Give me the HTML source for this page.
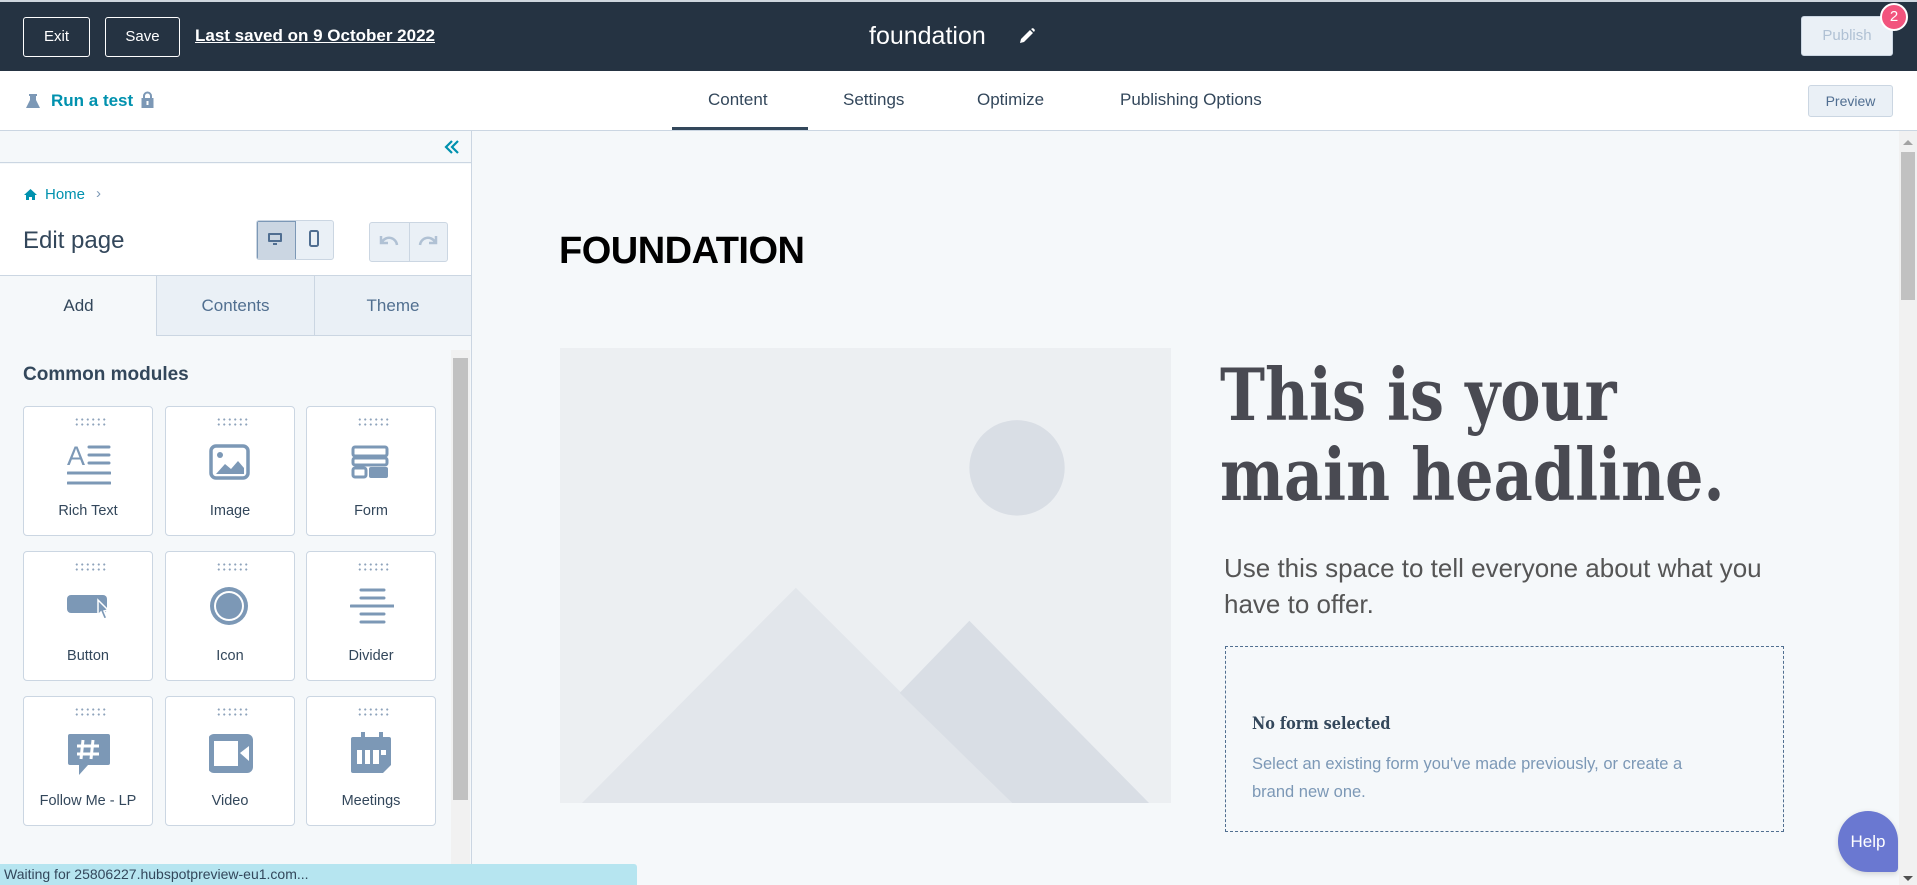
<!DOCTYPE html>
<html><head><meta charset="utf-8"><style>
*{box-sizing:border-box;margin:0;padding:0}
body{width:1917px;height:885px;overflow:hidden;font-family:"Liberation Sans",sans-serif;background:#f5f8fa;position:relative;color:#33475b}
.abs{position:absolute}
.top{left:0;top:0;width:1917px;height:71px;background:#253342;border-top:2px solid #cfd6de}
.btn{position:absolute;border:1px solid #fff;border-radius:3px;color:#fff;font-size:15px;text-align:center;line-height:38px;height:40px;top:15px}
.bar2{left:0;top:71px;width:1917px;height:60px;background:#fff;border-bottom:1px solid #cbd6e2}
.tab{position:absolute;top:19px;font-size:17px;color:#33475b}
.side{left:0;top:131px;width:472px;height:754px;background:#f5f8fa;border-right:1px solid #cbd6e2}
.card{position:absolute;width:130px;height:130px;background:#fff;border:1px solid #cbd6e2;border-radius:4px}
.card .dots{position:absolute;left:50px;top:10px;width:34px;height:10px;background-image:radial-gradient(circle,#8ea3bb 0.9px,transparent 1.2px);background-size:5.5px 5px}
.card svg{position:absolute;left:43px;top:34px}
.card .lb{position:absolute;left:0;right:0;top:96px;text-align:center;font-size:14.5px;color:#33475b}
</style></head><body>
<div class="abs top">
 <div class="btn" style="left:23px;width:67px">Exit</div>
 <div class="btn" style="left:105px;width:75px">Save</div>
 <div class="abs" style="left:195px;top:24px;color:#fff;font-size:17px;font-weight:bold;text-decoration:underline">Last saved on 9 October 2022</div>
 <div class="abs" style="left:869px;top:20px;color:#fff;font-size:25px">foundation</div>
 <svg class="abs" style="left:1018px;top:25px" width="18" height="18" viewBox="0 0 18 18"><path d="M2 16l1-4 9-9 3 3-9 9z M13 2l2-1 2 2-1 2z" fill="#fff"/></svg>
 <div class="abs" style="left:1801px;top:14px;width:92px;height:40px;background:#eaf0f6;border:1px solid #cbd6e2;border-radius:3px;color:#b0c1d4;font-size:15px;text-align:center;line-height:38px">Publish</div>
 <div class="abs" style="left:1880px;top:1px;width:28px;height:28px;border-radius:50%;background:#f2547d;border:2px solid #fff;color:#fff;font-size:15px;text-align:center;line-height:24px">2</div>
</div>
<div class="abs bar2">
 <svg class="abs" style="left:25px;top:22px" width="16" height="16" viewBox="0 0 16 16"><path d="M4 1h8v2h-1v4l4 8H1l4-8V3H4z" fill="#7c98b6"/></svg>
 <div class="abs" style="left:51px;top:20px;color:#0091ae;font-size:17px;font-weight:bold">Run a test</div>
 <svg class="abs" style="left:140px;top:20px" width="15" height="17" viewBox="0 0 15 17"><path d="M3 7V5a4.5 4.5 0 019 0v2h1.5v10h-12V7zM5 7h5V5a2.5 2.5 0 00-5 0z" fill="#7c98b6"/><rect x="6.5" y="10" width="2" height="4" fill="#fff"/></svg>
 <div class="tab" style="left:708px">Content</div>
 <div class="abs" style="left:672px;top:56px;width:136px;height:3px;background:#33475b"></div>
 <div class="tab" style="left:843px">Settings</div>
 <div class="tab" style="left:977px">Optimize</div>
 <div class="tab" style="left:1120px">Publishing Options</div>
 <div class="abs" style="left:1808px;top:14px;width:85px;height:32px;background:#eaf0f6;border:1px solid #cbd6e2;border-radius:3px;color:#506e91;font-size:14px;text-align:center;line-height:30px">Preview</div>
</div>
<div class="abs side">
 <div class="abs" style="left:0;top:0;width:472px;height:32px;border-bottom:1px solid #cbd6e2"></div>
 <svg class="abs" style="left:444px;top:8px" width="16" height="16" viewBox="0 0 16 16"><path d="M8 2L2 8l6 6M14 2L8 8l6 6" stroke="#0091ae" stroke-width="2.2" fill="none"/></svg>
 <div class="abs" style="left:0;top:33px;width:471px;height:142px;background:#fff"></div>
 <svg class="abs" style="left:24px;top:57px" width="13" height="13" viewBox="0 0 13 13"><path d="M6.5 1L0 7h2v5h3V9h3v3h3V7h2z" fill="#0091ae"/></svg>
 <div class="abs" style="left:45px;top:55px;color:#0091ae;font-size:15px">Home</div>
 <div class="abs" style="left:96px;top:54px;color:#7c98b6;font-size:15px">›</div>
 <div class="abs" style="left:23px;top:96px;font-size:24px;color:#33475b">Edit page</div>
 <div class="abs" style="left:256px;top:89px;width:78px;height:40px;border:1px solid #cbd6e2;border-radius:3px;background:#eaf0f6;overflow:hidden"><div style="width:39px;height:40px;background:#cbd6e2;border:1px solid #7c98b6"></div></div>
 <svg class="abs" style="left:268px;top:101px" width="14" height="14" viewBox="0 0 14 14"><rect x="0" y="1" width="14" height="9" rx="1" fill="#506e91"/><rect x="2" y="3" width="10" height="5" fill="#cbd6e2"/><rect x="5" y="11" width="4" height="2" fill="#506e91"/></svg>
 <svg class="abs" style="left:309px;top:99px" width="10" height="17" viewBox="0 0 10 17"><rect x="1" y="1" width="8" height="15" rx="1.5" fill="none" stroke="#506e91" stroke-width="2"/></svg>
 <div class="abs" style="left:369px;top:91px;width:79px;height:40px;border:1px solid #cbd6e2;border-radius:3px;background:#eaf0f6"><div style="position:absolute;left:39px;top:0;width:1px;height:38px;background:#cbd6e2"></div></div>
 <svg class="abs" style="left:379px;top:103px" width="20" height="14" viewBox="0 0 20 14"><path d="M2 2v7h7M3 8a8 8 0 0115 3" stroke="#b0c1d4" stroke-width="2.5" fill="none"/></svg>
 <svg class="abs" style="left:418px;top:103px" width="20" height="14" viewBox="0 0 20 14"><path d="M18 2v7h-7M17 8a8 8 0 00-15 3" stroke="#b0c1d4" stroke-width="2.5" fill="none"/></svg>
 <div class="abs" style="left:0;top:144px;width:157px;height:61px;border-top:1px solid #cbd6e2;background:#f5f8fa;text-align:center;line-height:60px;font-size:17px">Add</div>
 <div class="abs" style="left:156px;top:144px;width:159px;height:61px;border:1px solid #cbd6e2;background:#eaf0f6;text-align:center;line-height:60px;font-size:17px;color:#516f90">Contents</div>
 <div class="abs" style="left:314px;top:144px;width:158px;height:61px;border:1px solid #cbd6e2;background:#eaf0f6;text-align:center;line-height:60px;font-size:17px;color:#516f90">Theme</div>
 <div class="abs" style="left:23px;top:233px;font-size:19px;font-weight:bold;color:#33475b">Common modules</div>
 <div class="abs" style="left:451px;top:219px;width:19px;height:535px;background:#f1f1f1"></div>
 <div class="abs" style="left:453px;top:227px;width:15px;height:442px;background:#c1c1c1"></div>

 <div class="card" style="left:23px;top:275px"><div class="dots"></div>
  <svg width="44" height="46" viewBox="0 0 44 46"><text x="0" y="24" font-family="Liberation Sans" font-size="27" fill="#7c98b6">A</text><path d="M22 6h20M22 14h20M22 22h20M1 32h42M1 42h42" stroke="#7c98b6" stroke-width="3" stroke-linecap="round"/></svg>
  <div class="lb">Rich Text</div></div>
 <div class="card" style="left:165px;top:275px"><div class="dots"></div>
  <svg width="44" height="46" viewBox="0 0 44 46"><rect x="2" y="5" width="37" height="32" rx="5" fill="none" stroke="#7c98b6" stroke-width="3.5"/><circle cx="11" cy="14" r="3" fill="#7c98b6"/><path d="M7 33l9-10 6 5 7-8 6 7v6z" fill="#7c98b6"/></svg>
  <div class="lb">Image</div></div>
 <div class="card" style="left:306px;top:275px"><div class="dots"></div>
  <svg width="44" height="46" viewBox="0 0 44 46"><rect x="3" y="6" width="34" height="9" rx="2" fill="none" stroke="#7c98b6" stroke-width="3"/><rect x="3" y="17" width="34" height="7" rx="2" fill="none" stroke="#7c98b6" stroke-width="3"/><rect x="3" y="27" width="13" height="9" rx="2" fill="none" stroke="#7c98b6" stroke-width="3"/><rect x="19" y="26" width="19" height="11" rx="2" fill="#7c98b6"/></svg>
  <div class="lb">Form</div></div>

 <div class="card" style="left:23px;top:420px"><div class="dots"></div>
  <svg width="44" height="46" viewBox="0 0 44 46"><rect x="0" y="9" width="40" height="18" rx="4" fill="#7c98b6"/><path d="M31 14l10 10-4 1 3 7-3 1-3-7-3 3z" fill="#7c98b6" stroke="#fff" stroke-width="1.5"/></svg>
  <div class="lb">Button</div></div>
 <div class="card" style="left:165px;top:420px"><div class="dots"></div>
  <svg width="44" height="46" viewBox="0 0 44 46"><circle cx="20" cy="20" r="19" fill="#7c98b6"/><circle cx="20" cy="20" r="15" fill="#fff"/><circle cx="20" cy="20" r="13" fill="#7c98b6"/></svg>
  <div class="lb">Icon</div></div>
 <div class="card" style="left:306px;top:420px"><div class="dots"></div>
  <svg width="44" height="46" viewBox="0 0 44 46"><path d="M11 4h23M11 12h23M1 20h43M11 28h23M11 36h23" stroke="#7c98b6" stroke-width="3" stroke-linecap="round"/></svg>
  <div class="lb">Divider</div></div>

 <div class="card" style="left:23px;top:565px"><div class="dots"></div>
  <svg width="44" height="46" viewBox="0 0 44 46"><path d="M3 3h38a2 2 0 012 2v27a2 2 0 01-2 2H21l-9 10v-10H3a2 2 0 01-2-2V5a2 2 0 012-2z" fill="#7c98b6"/><path d="M16 9l-2 19M26 9l-2 19M10 15h22M10 23h22" stroke="#fff" stroke-width="3"/></svg>
  <div class="lb">Follow Me - LP</div></div>
 <div class="card" style="left:165px;top:565px"><div class="dots"></div>
  <svg width="48" height="46" viewBox="0 0 48 46"><rect x="-1" y="3" width="45" height="39" rx="6" fill="#7c98b6"/><rect x="5" y="10" width="24" height="25" fill="#fff"/><path d="M31 22l9-7v15z" fill="#fff"/></svg>
  <div class="lb">Video</div></div>
 <div class="card" style="left:306px;top:565px"><div class="dots"></div>
  <svg width="44" height="46" viewBox="0 0 44 46"><rect x="11" y="1" width="4" height="8" fill="#7c98b6"/><rect x="29" y="1" width="4" height="8" fill="#7c98b6"/><path d="M3 6h36a2 2 0 012 2v26l-8 8H3a2 2 0 01-2-2V8a2 2 0 012-2z" fill="#7c98b6"/><rect x="7" y="19" width="5" height="14" fill="#fff"/><rect x="15" y="19" width="5" height="14" fill="#fff"/><rect x="23" y="19" width="6" height="14" fill="#fff"/><rect x="31" y="19" width="5" height="5" fill="#fff"/></svg>
  <div class="lb">Meetings</div></div>
</div>
<div class="abs" style="left:0;top:864px;width:637px;height:21px;background:#b6e5f0;border-top-right-radius:3px;font-size:14px;color:#33475b;padding-left:4px;line-height:21px">Waiting for 25806227.hubspotpreview-eu1.com...</div>

<div class="abs" style="left:559px;top:230px;font-size:38px;font-weight:bold;color:#000;letter-spacing:-0.5px">FOUNDATION</div>
<svg class="abs" style="left:560px;top:348px" width="611" height="455" viewBox="0 0 500 372" preserveAspectRatio="none"><rect width="500" height="372" fill="#eceff2"/><circle cx="374" cy="98" r="39" fill="#d9dee5"/><polygon points="18,372 193,196 370,372" fill="#e2e6eb"/><polygon points="335,223 482,372 370,372 278,282" fill="#d9dee5"/></svg>
<div class="abs" style="left:1220px;top:355px;font-family:'DejaVu Serif',serif;font-weight:bold;font-size:72px;line-height:80px;color:#494a52;transform:scaleX(.84);transform-origin:left top;white-space:nowrap">This is your<br>main headline.</div>
<div class="abs" style="left:1224px;top:550px;font-size:26px;line-height:36px;color:#555;width:580px">Use this space to tell everyone about what you have to offer.</div>
<div class="abs" style="left:1225px;top:646px;width:559px;height:186px;border:1px dashed #516f90"></div>
<div class="abs" style="left:1252px;top:714px;font-family:'DejaVu Serif',serif;font-weight:bold;font-size:17px;color:#33475b;transform:scaleX(.85);transform-origin:left">No form selected</div>
<div class="abs" style="left:1252px;top:750px;width:465px;font-size:16.5px;line-height:28px;color:#7c98b6">Select an existing form you've made previously, or create a brand new one.</div>
<div class="abs" style="left:1838px;top:811px;width:60px;height:61px;background:#6a78d1;border-radius:30px 30px 4px 30px;color:#fff;font-size:17px;text-align:center;line-height:61px;box-shadow:0 2px 6px rgba(0,0,0,.15)">Help</div>
<div class="abs" style="left:1899px;top:131px;width:18px;height:754px;background:#f1f1f1"></div>
<div class="abs" style="left:1901px;top:152px;width:14px;height:148px;background:#c1c1c1"></div>
<div class="abs" style="left:1903px;top:140px;width:0;height:0;border-left:5px solid transparent;border-right:5px solid transparent;border-bottom:5px solid #a3a3a3"></div>
<div class="abs" style="left:1903px;top:876px;width:0;height:0;border-left:5px solid transparent;border-right:5px solid transparent;border-top:5px solid #505050"></div>
</body></html>
